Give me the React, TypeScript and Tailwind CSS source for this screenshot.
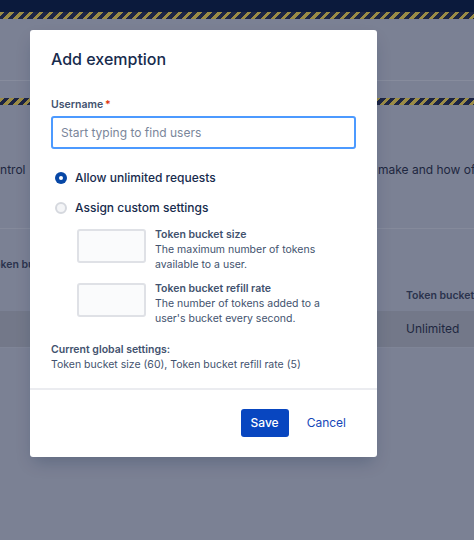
import React from "react";

const stripes =
  "h-[7px] bg-[repeating-linear-gradient(135deg,#9a8b46_0px,#9a8b46_3px,#1c2444_3px,#1c2444_7px)]";

function Radio({ checked, label }: { checked?: boolean; label: string }) {
  return (
    <div className="flex h-[30px] items-center gap-[8px] pl-[4px]">
      {checked ? (
        <span className="flex h-[12px] w-[12px] items-center justify-center rounded-full bg-[#0747a6]">
          <span className="h-[4px] w-[4px] rounded-full bg-white" />
        </span>
      ) : (
        <span className="h-[12px] w-[12px] rounded-full border-2 border-[#d5d8de] bg-[#f4f5f7]" />
      )}
      <span className="text-[12px] font-medium text-[#172b4d]">{label}</span>
    </div>
  );
}

function TokenField({ title, lines }: { title: string; lines: string[] }) {
  return (
    <div className="flex gap-[9px]">
      <div className="mt-[2px] h-[34px] w-[69px] shrink-0 rounded-[3px] border-2 border-[#dfe1e6] bg-[#fafbfc]" />
      <div className="flex flex-col text-[10.5px] leading-[15px]">
        <span className="font-semibold text-[#42526e]">{title}</span>
        {lines.map((l) => (
          <span key={l} className="text-[#42526e]">
            {l}
          </span>
        ))}
      </div>
    </div>
  );
}

export default function App() {
  return (
    <div className="relative h-[540px] w-[474px] overflow-hidden bg-[#7b8194] font-['Inter',sans-serif] text-[#1e2740]">
      {/* page behind the dialog */}
      <div className="h-[12px] bg-[#0b1a3c]" />
      <div className={stripes} />
      <div className="h-[61px]" />
      <div className="h-px bg-[#878c9d]" />
      <div className="h-[17px]" />
      <div className={stripes} />
      <div className="h-[56px]" />
      <div className="flex h-[18px] items-center whitespace-nowrap text-[12px]">
        <span className="-ml-[14px] w-[392px] shrink-0">control</span>
        <span>make and how often</span>
      </div>
      <div className="h-[49px]" />
      <div className="h-px bg-[#858a9b]" />
      <div className="h-[27px]" />
      <div className="flex h-[18px] items-center whitespace-nowrap text-[10.5px] font-semibold text-[#2a334d]">
        <span className="-ml-[12px]">Token bucket size</span>
      </div>
      <div className="h-[13px]" />
      <div className="flex h-[18px] items-center justify-end whitespace-nowrap text-[10.5px] font-semibold text-[#2a334d]">
        <span className="-mr-[20px] w-[88px]">Token bucket</span>
      </div>
      <div className="h-[6px]" />
      <div className="flex h-[37px] items-center border-b border-[#7f8597] bg-[#737889] pl-[406px] text-[12px] text-[#1e2740]">
        Unlimited
      </div>

      {/* dialog */}
      <div className="absolute left-[30px] top-[30px] flex w-[347px] flex-col rounded-[3px] bg-white shadow-[0_8px_16px_-4px_rgba(9,30,66,0.25)]">
        <div className="px-[21px] pt-[17px]">
          <h1 className="text-[16px] font-medium leading-[24px] text-[#172b4d]">Add exemption</h1>
        </div>
        <div className="px-[21px] pt-[26px]">
          <div className="flex h-[16px] items-center text-[10.5px] font-semibold text-[#42526e]">
            Username<span className="ml-[2px] text-[#de350b]">*</span>
          </div>
          <div className="mt-[3px] flex h-[33px] items-center rounded-[3px] border-2 border-[#4c9aff] px-[8px] text-[12px] text-[#7a869a]">
            Start typing to find users
          </div>
          <div className="mt-[14px] flex flex-col">
            <Radio checked label="Allow unlimited requests" />
            <Radio label="Assign custom settings" />
          </div>
          <div className="mt-[4px] flex flex-col gap-[9px] pl-[26px]">
            <TokenField
              title="Token bucket size"
              lines={["The maximum number of tokens", "available to a user."]}
            />
            <TokenField
              title="Token bucket refill rate"
              lines={["The number of tokens added to a", "user's bucket every second."]}
            />
          </div>
          <div className="mt-[16px] flex flex-col text-[10.5px] leading-[15px]">
            <span className="font-semibold text-[#42526e]">Current global settings:</span>
            <span className="text-[#42526e]">Token bucket size (60), Token bucket refill rate (5)</span>
          </div>
        </div>
        <div className="mt-[16px] h-[2px] bg-[#ebecf0]" />
        <div className="flex justify-end gap-[8px] px-[21px] pb-[20px] pt-[19px]">
          <button className="h-[28px] rounded-[3px] bg-[#0846c0] px-[10px] text-[12px] font-medium text-white">
            Save
          </button>
          <button className="h-[28px] rounded-[3px] px-[10px] text-[12px] text-[#1446b8]">Cancel</button>
        </div>
      </div>
    </div>
  );
}
